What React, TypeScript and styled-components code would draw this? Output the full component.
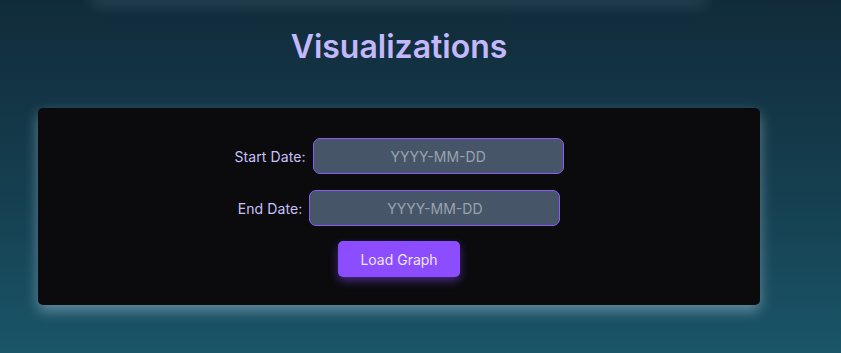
import React from "react";
import styled, { createGlobalStyle } from "styled-components";

const GlobalStyle = createGlobalStyle`
  html, body {
    margin: 0;
    padding: 0;
  }
  body {
    font-family: Inter, "Noto Sans", sans-serif;
    background: #112b3a;
  }
`;

const Visualizations = () => {
  return (
    <Page>
      <GlobalStyle />
      <TopGlow />
      <Title>Visualizations</Title>
      <Card>
        <Row>
          <Label htmlFor="start">Start Date:</Label>
          <DateInput id="start" placeholder="YYYY-MM-DD" />
        </Row>
        <Row>
          <Label htmlFor="end">End Date:</Label>
          <DateInput id="end" placeholder="YYYY-MM-DD" />
        </Row>
        <LoadButton>Load Graph</LoadButton>
      </Card>
    </Page>
  );
};

const Page = styled.div`
  min-height: 100vh;
  box-sizing: border-box;
  width: 841px;
  padding: 0 81px 40px 38px;
  background: linear-gradient(to bottom, #112b3a 0%, #153f50 55%, #1a5568 100%);
  overflow: hidden;
`;

const TopGlow = styled.div`
  height: 0;
  margin: 0 60px;
  box-shadow: 0 0 14px 6px rgba(170, 200, 220, 0.16);
`;

const Title = styled.h1`
  margin: 27px 0 42px;
  text-align: center;
  font-size: 32px;
  font-weight: 600;
  line-height: 39px;
  color: #c4b8fc;
`;

const Card = styled.div`
  width: 722px;
  height: 197px;
  box-sizing: border-box;
  padding-top: 30px;
  background: #0b0b0e;
  border-radius: 5px;
  box-shadow: 0 6px 14px rgba(190, 215, 240, 0.45);
  display: flex;
  flex-direction: column;
  align-items: center;
  gap: 16px;
`;

const Row = styled.div`
  display: flex;
  align-items: center;
  gap: 7px;
`;

const Label = styled.label`
  font-size: 14px;
  letter-spacing: 0.1px;
  color: #c9c0fb;
`;

const DateInput = styled.input`
  width: 251px;
  height: 36px;
  box-sizing: border-box;
  background: #475569;
  border: 1.5px solid #8b5cf6;
  border-radius: 7px;
  font-family: Inter, sans-serif;
  font-size: 14px;
  color: #e5e7eb;
  text-align: center;
  outline: none;
  &::placeholder {
    color: #9aa2ae;
  }
`;

const LoadButton = styled.button`
  margin-top: -1px;
  width: 122px;
  height: 36px;
  border: none;
  border-radius: 5px;
  background: #8b4dff;
  color: #ece6ff;
  font-family: Inter, sans-serif;
  font-size: 14px;
  box-shadow: 0 4px 8px rgba(139, 77, 255, 0.45);
  cursor: pointer;
`;

export default function App() {
  return <Visualizations />;
}
